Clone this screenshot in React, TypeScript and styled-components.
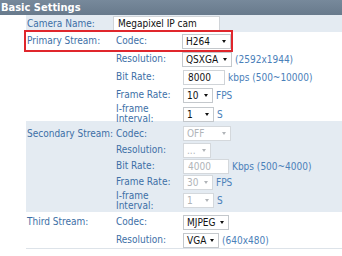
import React from "react";
import styled, { createGlobalStyle } from "styled-components";

const Global = createGlobalStyle`
  html, body { margin: 0; padding: 0; background: #ffffff; }
  body { font-family: "DejaVu Sans Condensed", "DejaVu Sans", Verdana, sans-serif; font-size: 10px; }
`;

const Page = styled.div`
  width: 342px;
  height: 256px;
  overflow: hidden;
  background: #ffffff;
`;

const Header = styled.div`
  height: 15px;
  background: linear-gradient(#77899b, #687a8c);
  color: #ffffff;
  font-weight: bold;
  font-size: 11px;
  line-height: 15px;
  padding-left: 1px;
`;

const Body = styled.div`
  margin-left: 26px;
  border-bottom: 1px solid #dde3e9;
`;

const Section = styled.div<{ $tint?: boolean; $padTop?: number; $padBottom?: number }>`
  background: ${(p) => (p.$tint ? "#e4ebf2" : "transparent")};
  padding-top: ${(p) => p.$padTop ?? 0}px;
  padding-bottom: ${(p) => p.$padBottom ?? 0}px;
`;

const Row = styled.div<{ $h: number; $highlight?: boolean }>`
  display: grid;
  grid-template-columns: 89px 67px 1fr;
  align-items: center;
  height: ${(p) => p.$h}px;
  width: ${(p) => (p.$highlight ? "205px" : "auto")};
  outline: ${(p) => (p.$highlight ? "2px solid #e0262c" : "none")};
`;

const Label = styled.span`
  color: #3d6fa6;
  padding-left: 1px;
  line-height: 10px;
  white-space: nowrap;
`;

const Controls = styled.div`
  display: flex;
  align-items: center;
  gap: 3px;
`;

const Unit = styled.span`
  color: #4a80b9;
  white-space: nowrap;
  flex-shrink: 0;
`;

const Box = styled.div<{ $w: number; $disabled?: boolean; $shift?: number }>`
  box-sizing: border-box;
  flex-shrink: 0;
  display: flex;
  align-items: center;
  justify-content: space-between;
  width: ${(p) => p.$w}px;
  height: 15px;
  margin-left: ${(p) => p.$shift ?? 0}px;
  padding: 0 4px 0 3px;
  background: #ffffff;
  border: 1px solid ${(p) => (p.$disabled ? "#d4d8dc" : "#c4c8cc")};
  color: ${(p) => (p.$disabled ? "#b0b4b8" : "#111111")};
  white-space: nowrap;
`;

const Arrow = styled.span<{ $disabled?: boolean }>`
  flex-shrink: 0;
  width: 0;
  height: 0;
  margin-left: 4px;
  border-left: 2.5px solid transparent;
  border-right: 2.5px solid transparent;
  border-top: 3px solid ${(p) => (p.$disabled ? "#b0b4b8" : "#111111")};
`;

const TextField = styled.div<{ $w: number; $disabled?: boolean; $shift?: number }>`
  box-sizing: border-box;
  flex-shrink: 0;
  display: flex;
  align-items: center;
  width: ${(p) => p.$w}px;
  height: 15px;
  margin-left: ${(p) => p.$shift ?? 0}px;
  padding-left: 4px;
  background: #ffffff;
  border: 1px solid ${(p) => (p.$disabled ? "#d4d8dc" : "#d0d4d8")};
  color: ${(p) => (p.$disabled ? "#b0b4b8" : "#111111")};
  white-space: nowrap;
`;

const Wide = styled.div`
  grid-column: 2 / span 2;
  margin-left: -2px;
`;

type SelProps = { value: string; w: number; disabled?: boolean; shift?: number };
const Select = ({ value, w, disabled, shift }: SelProps) => (
  <Box $w={w} $disabled={disabled} $shift={shift}>
    <span>{value}</span>
    <Arrow $disabled={disabled} />
  </Box>
);

type Field = {
  label: React.ReactNode;
  kind: "select" | "text";
  value: string;
  w: number;
  unit?: string;
  h: number;
  shift?: number;
};

const StreamRows = ({
  name,
  fields,
  disabled,
  highlightFirst,
}: {
  name: string;
  fields: Field[];
  disabled?: boolean;
  highlightFirst?: boolean;
}) => (
  <>
    {fields.map((f, i) => (
      <Row key={i} $h={f.h} $highlight={highlightFirst && i === 0}>
        <Label>{i === 0 ? name : ""}</Label>
        <Label>{f.label}</Label>
        <Controls>
          {f.kind === "select" ? (
            <Select value={f.value} w={f.w} disabled={disabled} shift={f.shift} />
          ) : (
            <TextField $w={f.w} $disabled={disabled} $shift={f.shift}>
              {f.value}
            </TextField>
          )}
          {f.unit && <Unit>{f.unit}</Unit>}
        </Controls>
      </Row>
    ))}
  </>
);

const iframe = (
  <>
    I-frame
    <br />
    Interval:
  </>
);

export default function App() {
  return (
    <Page>
      <Global />
      <Header>Basic Settings</Header>
      <Body>
        <Section $tint>
          <Row $h={17}>
            <Label>Camera Name:</Label>
            <Wide>
              <TextField $w={107}>Megapixel IP cam</TextField>
            </Wide>
          </Row>
        </Section>
        <Section>
          <StreamRows
            name="Primary Stream:"
            highlightFirst
            fields={[
              { label: "Codec:", kind: "select", value: "H264", w: 49, h: 18 },
              { label: "Resolution:", kind: "select", value: "QSXGA", w: 50, unit: "(2592x1944)", h: 18 },
              { label: "Bit Rate:", kind: "text", value: "8000", w: 42, unit: "kbps (500~10000)", h: 18, shift: 1 },
              { label: "Frame Rate:", kind: "select", value: "10", w: 30, unit: "FPS", h: 18, shift: 1 },
              { label: iframe, kind: "select", value: "1", w: 31, unit: "S", h: 17, shift: 1 },
            ]}
          />
        </Section>
        <Section $tint $padTop={4} $padBottom={1}>
          <StreamRows
            name="Secondary Stream:"
            disabled
            fields={[
              { label: "Codec:", kind: "select", value: "OFF", w: 48, h: 17, shift: 1 },
              { label: "Resolution:", kind: "select", value: "...", w: 28, h: 16, shift: 1 },
              { label: "Bit Rate:", kind: "text", value: "4000", w: 46, unit: "Kbps (500~4000)", h: 16, shift: 1 },
              { label: "Frame Rate:", kind: "select", value: "30", w: 30, unit: "FPS", h: 16, shift: 1 },
              { label: iframe, kind: "select", value: "1", w: 31, unit: "S", h: 21, shift: 1 },
            ]}
          />
        </Section>
        <Section>
          <StreamRows
            name="Third Stream:"
            fields={[
              { label: "Codec:", kind: "select", value: "MJPEG", w: 46, h: 20, shift: 1 },
              { label: "Resolution:", kind: "select", value: "VGA", w: 36, unit: "(640x480)", h: 16, shift: 1 },
            ]}
          />
        </Section>
      </Body>
    </Page>
  );
}
